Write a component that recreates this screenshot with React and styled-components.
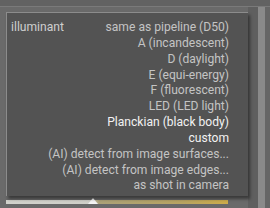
import styled, { createGlobalStyle } from "styled-components";

const GlobalStyle = createGlobalStyle`
  html, body {
    margin: 0;
    padding: 0;
    background: #6a6a6a;
    font-family: Roboto, "Liberation Sans", sans-serif;
  }
`;

const items = [
  { label: "same as pipeline (D50)" },
  { label: "A (incandescent)" },
  { label: "D (daylight)" },
  { label: "E (equi-energy)" },
  { label: "F (fluorescent)" },
  { label: "LED (LED light)" },
  { label: "Planckian (black body)", tone: "bright" },
  { label: "custom", tone: "bright" },
  { label: "(AI) detect from image surfaces..." },
  { label: "(AI) detect from image edges..." },
  { label: "as shot in camera" },
];

export default function App() {
  const [first, ...rest] = items;
  return (
    <>
      <GlobalStyle />
      <Screen>
        <TopStrip />
        <Body>
          <Main>
            <Popup>
              <HeaderRow>
                <Label>illuminant</Label>
                <Item tone={first.tone}>{first.label}</Item>
              </HeaderRow>
              {rest.map((item) => (
                <Item key={item.label} tone={item.tone}>
                  {item.label}
                </Item>
              ))}
            </Popup>
            <Slider>
              <SliderTrack />
              <Marker />
            </Slider>
          </Main>
          <Gutter />
          <Scrollbar />
        </Body>
      </Screen>
    </>
  );
}

const Screen = styled.div`
  width: 270px;
  height: 208px;
  overflow: hidden;
  display: flex;
  flex-direction: column;
`;

const TopStrip = styled.div`
  height: 6px;
  background: #626262;
  border-bottom: 1px solid #7a7a7a;
`;

const Body = styled.div`
  flex: 1;
  display: flex;
`;

const Main = styled.div`
  width: 248px;
  min-width: 0;
  flex-shrink: 0;
  padding: 5px 0 0 6px;
  box-sizing: border-box;
`;

const Popup = styled.div`
  position: relative;
  z-index: 2;
  height: 184px;
  box-sizing: border-box;
  background: #535353;
  border-top: 1px solid #8c8c8c;
  border-left: 1px solid #8c8c8c;
  box-shadow: 2px 3px 3px rgba(0, 0, 0, 0.45);
  display: flex;
  flex-direction: column;
  align-items: flex-end;
  padding: 7px 19px 0 4px;
  font-size: 12.1px;
  line-height: 15.85px;
`;

const HeaderRow = styled.div`
  align-self: stretch;
  display: flex;
  justify-content: space-between;
`;

const Label = styled.div`
  color: #cfcfcf;
`;

const Item = styled.div`
  color: ${(p) => (p.tone === "bright" ? "#f2f2f2" : "#c4c4c4")};
  white-space: nowrap;
`;

const Slider = styled.div`
  position: relative;
  margin-top: 4px;
  width: 222px;
  height: 4px;
`;

const SliderTrack = styled.div`
  height: 4px;
  background: linear-gradient(
    to right,
    #d2d2cc 0%,
    #cfcfc8 38%,
    #aca178 42%,
    #b8a462 80%,
    #cdac4a 100%
  );
`;

const Marker = styled.div`
  position: absolute;
  left: 82px;
  top: -2px;
  width: 0;
  height: 0;
  border-left: 5px solid transparent;
  border-right: 5px solid transparent;
  border-bottom: 6px solid #f4f4f4;
`;

const Gutter = styled.div`
  width: 10px;
  flex-shrink: 0;
  background: #5f5f5f;
`;

const Scrollbar = styled.div`
  width: 7px;
  flex-shrink: 0;
  background: #8a8a8a;
  border-right: 5px solid #666666;
`;
